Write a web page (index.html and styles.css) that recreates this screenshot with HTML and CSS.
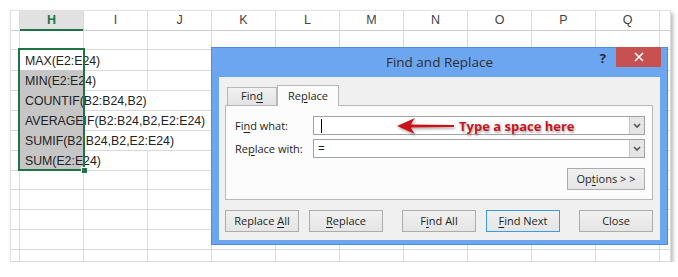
FILE: index.html
```html
<!DOCTYPE html>
<html>
<head>
<meta charset="utf-8">
<link rel="stylesheet" href="styles.css">
</head>
<body>
<div class="sheet">
  <div class="row hdr">
    <div></div>
    <div class="ch on">H</div>
    <div class="ch">I</div>
    <div class="ch">J</div>
    <div class="ch">K</div>
    <div class="ch">L</div>
    <div class="ch">M</div>
    <div class="ch">N</div>
    <div class="ch">O</div>
    <div class="ch">P</div>
    <div class="ch">Q</div>
    <div></div>
  </div>
  <div class="row"><div></div><div></div><div></div><div></div><div></div><div></div><div></div><div></div><div></div><div></div><div></div><div></div></div>
  <div class="row"><div></div><div class="t">MAX(E2:E24)</div><div></div><div></div><div></div><div></div><div></div><div></div><div></div><div></div><div></div><div></div></div>
  <div class="row"><div></div><div class="t g">MIN(E2:E24)</div><div></div><div></div><div></div><div></div><div></div><div></div><div></div><div></div><div></div><div></div></div>
  <div class="row"><div></div><div class="t g">COUNTIF(B2:B24,B2)</div><div class="nl"></div><div></div><div></div><div></div><div></div><div></div><div></div><div></div><div></div><div></div></div>
  <div class="row"><div></div><div class="t g">AVERAGEIF(B2:B24,B2,E2:E24)</div><div class="nl"></div><div></div><div></div><div></div><div></div><div></div><div></div><div></div><div></div><div></div></div>
  <div class="row"><div></div><div class="t g">SUMIF(B2:B24,B2,E2:E24)</div><div class="nl"></div><div></div><div></div><div></div><div></div><div></div><div></div><div></div><div></div><div></div></div>
  <div class="row"><div></div><div class="t g">SUM(E2:E24)</div><div></div><div></div><div></div><div></div><div></div><div></div><div></div><div></div><div></div><div></div></div>
  <div class="row"><div></div><div></div><div></div><div></div><div></div><div></div><div></div><div></div><div></div><div></div><div></div><div></div></div>
  <div class="row"><div></div><div></div><div></div><div></div><div></div><div></div><div></div><div></div><div></div><div></div><div></div><div></div></div>
  <div class="row"><div></div><div></div><div></div><div></div><div></div><div></div><div></div><div></div><div></div><div></div><div></div><div></div></div>
  <div class="row"><div></div><div></div><div></div><div></div><div></div><div></div><div></div><div></div><div></div><div></div><div></div><div></div></div>
  <div class="row short"><div></div><div></div><div></div><div></div><div></div><div></div><div></div><div></div><div></div><div></div><div></div><div></div></div>

  <div class="selbox"><span class="handle"></span></div>

  <div class="dialog">
    <div class="titlebar">
      <span></span>
      <span class="title">Find and Replace</span>
      <div class="ctrls">
        <span class="help">?</span>
        <span class="close"><svg width="10" height="10" viewBox="0 0 10 10"><path d="M1 1 L9 9 M9 1 L1 9" stroke="#fff" stroke-width="1.6"/></svg></span>
      </div>
    </div>
    <div class="panel">
      <div class="tabs">
        <span class="tab">Fin<u>d</u></span>
        <span class="tab active">Re<u>p</u>lace</span>
      </div>
      <div class="page">
        <div class="field">
          <label>Fi<u>n</u>d what:</label>
          <div class="input">
            <span class="caret"></span>
            <div class="note">
              <svg width="60" height="22" viewBox="0 0 60 22"><path d="M1 11 L19 3 Q15.5 7.5 15 9.6 L58 9.9 L58 12.1 L15 12.4 Q15.5 14.5 19 19 Z" fill="#cc1219"/></svg>
              <span class="notetext">Type a space here</span>
            </div>
            <span class="drop"><svg width="8" height="6" viewBox="0 0 8 6"><path d="M1 1 L4 4 L7 1" fill="none" stroke="#555" stroke-width="1.6"/></svg></span>
          </div>
        </div>
        <div class="field">
          <label>Re<u>p</u>lace with:</label>
          <div class="input">
            <span class="val">=</span>
            <span class="drop"><svg width="8" height="6" viewBox="0 0 8 6"><path d="M1 1 L4 4 L7 1" fill="none" stroke="#555" stroke-width="1.6"/></svg></span>
          </div>
        </div>
        <div class="opts"><span class="btn">Op<u>t</u>ions &gt; &gt;</span></div>
      </div>
      <div class="buttons">
        <span class="btn">Replace <u>A</u>ll</span>
        <span class="btn gap1"><u>R</u>eplace</span>
        <span class="btn gap2">F<u>i</u>nd All</span>
        <span class="btn gap1 def"><u>F</u>ind Next</span>
        <span class="btn gap3">Close</span>
      </div>
    </div>
  </div>
</div>
</body>
</html>
```
FILE: styles.css
```css
html, body { margin: 0; background: #fff; }
.sheet {
  position: relative;
  margin: 10px 0 0 10px;
  width: 661px;
  height: 252px;
  box-sizing: border-box;
  border-top: 1px solid #e2e2e2;
  border-left: 1px solid #e2e2e2;
  box-shadow: 2px 3px 4px rgba(0,0,0,0.28);
  background: #fff;
  overflow: hidden;
  font-family: "Liberation Sans", Arial, sans-serif;
}
.row {
  display: grid;
  grid-template-columns: 9px repeat(10, 64px) 1fr;
  height: 20px;
}
.row > div {
  box-sizing: border-box;
  border-right: 1px solid #dadada;
  border-bottom: 1px solid #dadada;
}
.row > div.nl { border-right-color: transparent; }
.row.hdr { height: 19px; }
.row.hdr > div { border-bottom-color: #cfcfcf; }
.row.short { height: 12px; }
.ch {
  text-align: center;
  font-size: 12.5px;
  line-height: 19px;
  color: #444;
}
.ch.on {
  background: #e1e1e1;
  color: #217346;
  font-weight: bold;
  border-bottom: 2px solid #217346 !important;
  line-height: 18px;
}
.t {
  padding: 2px 0 0 5px;
  line-height: 18px;
  font-size: 12.3px;
  white-space: nowrap;
  color: #222;
}
.t.g { background: #c6c6c6; }

.selbox {
  position: absolute;
  left: 7px;
  top: 37px;
  width: 67px;
  height: 123px;
  box-sizing: border-box;
  border: 2px solid #217346;
}
.handle {
  position: absolute;
  right: -4px;
  bottom: -4px;
  width: 5px;
  height: 5px;
  background: #217346;
  box-shadow: -1px -1px 0 #fff;
}

.dialog {
  position: absolute;
  left: 200px;
  top: 36px;
  width: 457px;
  height: 198px;
  box-sizing: border-box;
  border: 1px solid #4f8ade;
  background: #6ca6f1;
  display: flex;
  flex-direction: column;
  font-family: "Open Sans", sans-serif;
  font-size: 11px;
  color: #1e1e1e;
}
.titlebar {
  height: 29px;
  display: grid;
  grid-template-columns: 1fr auto 1fr;
}
.title {
  font-size: 13.5px;
  line-height: 28px;
  color: #2f2f2f;
}
.ctrls {
  justify-self: end;
  display: flex;
  align-items: flex-start;
  margin-right: 6px;
}
.help {
  font-weight: bold;
  font-size: 13px;
  line-height: 16px;
  color: #2a2a2a;
  margin-top: 2px;
  margin-right: 10px;
}
.close {
  width: 45px;
  height: 20px;
  background: #c75050;
  display: flex;
  align-items: center;
  justify-content: center;
  margin-top: -1px;
}
.panel {
  flex: 1;
  margin: 0 7px 4px 7px;
  background: #f0f0f0;
  padding: 8px 7px 8px 6px;
  display: flex;
  flex-direction: column;
}
.tabs {
  display: flex;
  height: 20px;
  padding-left: 2px;
  position: relative;
  z-index: 1;
}
.tab {
  box-sizing: border-box;
  margin-top: 2px;
  width: 50px;
  height: 18px;
  border: 1px solid #b8b8b8;
  border-bottom: none;
  background: linear-gradient(#f2f2f2, #e3e3e3);
  text-align: center;
  line-height: 16px;
}
.tab.active {
  margin-top: 0;
  width: 62px;
  height: 21px;
  background: #fcfcfc;
  border-left: 1px solid #b8b8b8;
  line-height: 19px;
}
.page {
  height: 95px;
  box-sizing: border-box;
  border: 1px solid #b8b8b8;
  background: #fcfcfc;
  padding: 10px 7px 8px 9px;
  display: flex;
  flex-direction: column;
}
.field {
  display: flex;
  align-items: center;
  height: 19px;
  margin-bottom: 4px;
}
.field label {
  width: 78px;
  flex: none;
}
.input {
  position: relative;
  flex: 1;
  height: 19px;
  box-sizing: border-box;
  border: 1px solid #a2a2a2;
  background: #fff;
  display: flex;
  align-items: center;
}
.caret {
  width: 1px;
  height: 14px;
  background: #000;
  margin-left: 7px;
}
.val {
  margin-left: 4px;
  font-size: 12px;
}
.drop {
  margin-left: auto;
  width: 15px;
  height: 17px;
  box-sizing: border-box;
  border-left: 1px solid #c9c9c9;
  background: #e5e5e5;
  display: flex;
  align-items: center;
  justify-content: center;
}
.note {
  position: absolute;
  left: 82px;
  top: 0;
  bottom: 0;
  display: flex;
  align-items: center;
}
.note svg { filter: drop-shadow(1px 2px 1px rgba(0,0,0,0.3)); }
.notetext {
  margin-left: 3px;
  font-weight: 700;
  font-size: 13px;
  color: #c8141c;
  text-shadow: 1px 2px 2px rgba(0,0,0,0.3);
  white-space: nowrap;
}
.opts {
  margin-top: 6px;
  display: flex;
  justify-content: flex-end;
}
.btn {
  box-sizing: border-box;
  width: 74px;
  height: 22px;
  border: 1px solid #acacac;
  background: linear-gradient(#f0f0f0, #e5e5e5);
  text-align: center;
  line-height: 20px;
  white-space: nowrap;
}
.opts .btn { width: 78px; }
.buttons {
  margin-top: 10px;
  display: flex;
}
.gap1 { margin-left: 10px; }
.gap2 { margin-left: 19px; }
.gap3 { margin-left: 19px; }
.btn.def { border-color: #3c9be6; }
u { text-underline-offset: 2px; }
```
